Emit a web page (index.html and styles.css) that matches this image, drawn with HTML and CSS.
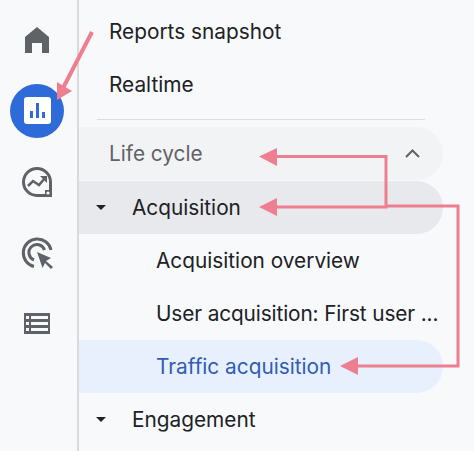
FILE: index.html
```html
<!DOCTYPE html>
<html lang="en">

<head>
  <meta charset="UTF-8" />
  <title>Reports navigation</title>
  <link rel="stylesheet" href="styles.css">
</head>

<body>
  <div class="app">
    <div class="rail">
      <div class="rail-item">
        <svg width="24" height="26" viewBox="0 0 24 26">
          <path fill="#5f6368" d="M12 0 24 10V26H17V16H7V26H0V10Z" />
        </svg>
      </div>
      <div class="rail-item">
        <div class="rail-active">
          <svg width="27" height="27" viewBox="0 0 27 27">
            <rect width="27" height="27" rx="3" fill="#fff" />
            <path fill="#2f6bd8" d="M6 14h3v7H6zM12 6h3v15h-3zM18 15h3v6h-3z" />
          </svg>
        </div>
      </div>
      <div class="rail-item">
        <svg width="32" height="32" viewBox="0 0 32 32" fill="none">
          <path stroke="#5f6368" stroke-width="3" d="M29.5 29.5H16A13.5 13.5 0 1 1 29.5 16Z" />
          <path stroke="#5f6368" stroke-width="2.500" d="M7 20l5-5 6 4 6-7" />
          <path fill="#5f6368" d="M19 10h7v7z" />
          <path fill="#5f6368" d="M24 24h7v7h-7z" />
          <circle cx="27" cy="27" r="1.600" fill="#f8f9fb" />
        </svg>
      </div>
      <div class="rail-item">
        <svg width="32" height="32" viewBox="0 0 32 32" fill="none">
          <path stroke="#5f6368" stroke-width="3" d="M13 29.500A14 14 0 1 1 30 13" />
          <path stroke="#5f6368" stroke-width="3" d="M13 23A8 8 0 1 1 23.500 13" />
          <path fill="#5f6368" d="M16 15 30 21 25 24 32 30 30 32 24 26 21.500 31Z" />
        </svg>
      </div>
      <div class="rail-item">
        <svg width="26" height="21" viewBox="0 0 26 21">
          <path fill="#5f6368" fill-rule="evenodd" d="M0 0H26V21H0ZM2 3V6H5V3ZM7 3V6H24V3ZM2 9V12H5V9ZM7 9V12H24V9ZM2 15V18H5V15ZM7 15V18H24V15Z" />
        </svg>
      </div>
    </div>

    <div class="nav">
      <div class="row level-1">Reports snapshot</div>
      <div class="row level-1">Realtime</div>
      <div class="divider"></div>
      <div class="row level-1 section">
        Life cycle
        <svg class="chevron" width="15" height="9" viewBox="0 0 15 9" fill="none">
          <path stroke="#5f6368" stroke-width="2" d="M1 8 7.500 1.500 14 8" />
        </svg>
      </div>
      <div class="row level-2 open"><span class="caret"></span>Acquisition</div>
      <div class="row level-3">Acquisition overview</div>
      <div class="row level-3 tight">User acquisition: First user ...</div>
      <div class="row level-3 selected">Traffic acquisition</div>
      <div class="row level-2"><span class="caret"></span>Engagement</div>
    </div>
  </div>

  <!-- annotation arrows drawn over the nav -->
  <svg class="arrows" width="474" height="451" viewBox="0 0 474 451" fill="none">
    <path stroke="#ee7f90" stroke-width="4" d="M92 32 62 90" />
    <path fill="#ee7f90" d="M57 100 57 82 72 91Z" />
    <path stroke="#ee7f90" stroke-width="3" d="M276 156.500H386V207H276" />
    <path fill="#ee7f90" d="M259 156.500 277 148V166Z" />
    <path fill="#ee7f90" d="M259 207 277 198V216Z" />
    <path stroke="#ee7f90" stroke-width="3" d="M386 206H458V366H356" />
    <path fill="#ee7f90" d="M340 366 358 357V375Z" />
  </svg>
</body>

</html>
```

FILE: styles.css
```css
body {
  font-family: 'Inter', 'Noto Sans', sans-serif;
  background-color: #f8f9fb;
  margin: 0;
  padding: 0;
  overflow: hidden;
}

.app {
  display: flex;
  height: 451px;
}

.rail {
  width: 74px;
  padding-top: 4px;
  padding-right: 3px;
  border-right: 2px solid #d9dadc;
  flex-shrink: 0;
}

.rail-item {
  height: 71px;
  display: flex;
  align-items: center;
  justify-content: center;
}

.rail-active {
  width: 54px;
  height: 54px;
  border-radius: 50%;
  background-color: #2f6bd8;
  display: flex;
  align-items: center;
  justify-content: center;
}

.nav {
  width: 364px;
  padding-top: 5px;
}

.row {
  height: 53px;
  display: flex;
  align-items: center;
  font-size: 20.8px;
  color: #202124;
  box-sizing: border-box;
}

.level-1 {
  padding-left: 30px;
}

.level-2 {
  padding-left: 17px;
}

.level-3 {
  padding-left: 77px;
}

.tight {
  letter-spacing: -0.12px;
}

.divider {
  height: 1px;
  margin: 8px 18px 7px 18px;
  background-color: #dcdde0;
}

.section {
  color: #5f6368;
  background-color: #f2f3f5;
  border-radius: 0 27px 27px 0;
  justify-content: space-between;
  padding-right: 23px;
  margin-bottom: 1px;
}

.open {
  background-color: #e8e9ec;
  border-radius: 0 27px 27px 0;
}

.selected {
  color: #2f5cb8;
  background-color: #e8f0fd;
  border-radius: 0 27px 27px 0;
}

.caret {
  width: 0;
  height: 0;
  border-left: 5px solid transparent;
  border-right: 5px solid transparent;
  border-top: 5px solid #202124;
  margin-right: 26px;
}

.arrows {
  position: absolute;
  top: 0;
  left: 0;
  pointer-events: none;
}
```
